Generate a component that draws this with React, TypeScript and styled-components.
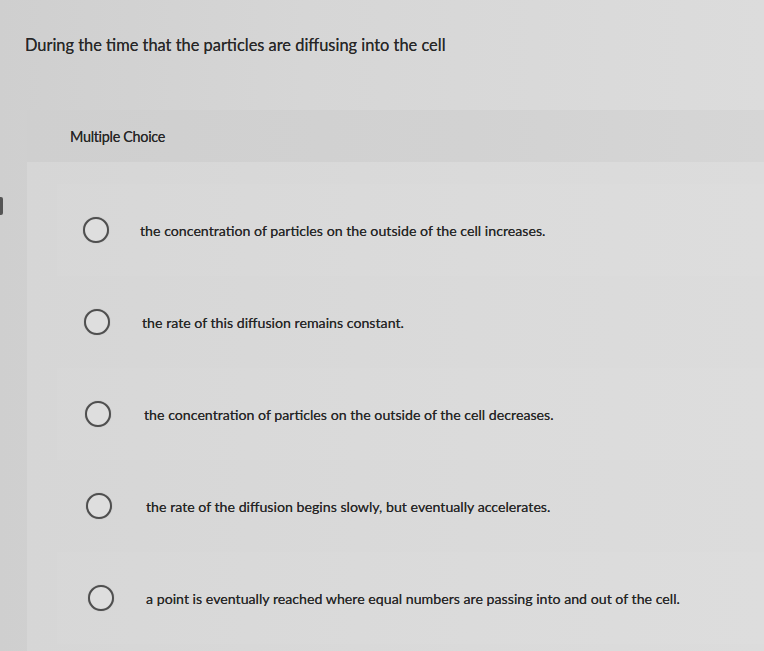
import React from "react";
import styled, { createGlobalStyle } from "styled-components";

const Global = createGlobalStyle`
  html, body {
    margin: 0;
    padding: 0;
    background: #d4d4d4;
  }
  body {
    font-family: Lato, "Open Sans", "Liberation Sans", sans-serif;
    color: #333;
    width: 764px;
    height: 651px;
    overflow: hidden;
  }
`;

const Page = styled.div`
  position: relative;
  width: 764px;
  height: 651px;
  overflow: hidden;
  background: linear-gradient(90deg, #cfcfcf 0%, #d6d6d6 40%, #dcdcdc 100%);
  display: flex;
  flex-direction: column;
`;

const EdgeTab = styled.div`
  position: absolute;
  left: 0;
  top: 197px;
  width: 3px;
  height: 18px;
  background: #555;
  border-radius: 0 2px 2px 0;
`;

const Title = styled.h1`
  margin: 0;
  padding: 34px 0 0 25px;
  height: 110px;
  flex: none;
  box-sizing: border-box;
  font-size: 16.4px;
  font-weight: 400;
  line-height: 22px;
  color: #262626;
  text-shadow: 0 0 0.6px rgba(0, 0, 0, 0.6);
`;

const Panel = styled.section`
  margin-left: 27px;
  flex: 1;
  background: linear-gradient(90deg, #d6d6d6 0%, #dadada 60%, #dcdcdc 100%);
  display: flex;
  flex-direction: column;
`;

const PanelHeader = styled.div`
  height: 52px;
  display: flex;
  align-items: center;
  padding-left: 43px;
  background: linear-gradient(90deg, #cfcfcf 0%, #d2d2d2 60%, #d6d6d6 100%);
  font-size: 14.4px;
  color: #242424;
  letter-spacing: -0.3px;
  text-shadow: 0 0 0.6px rgba(0, 0, 0, 0.6);
`;

const OptionList = styled.div`
  padding-top: 22px;
  display: flex;
  flex-direction: column;
`;

const Row = styled.label<{ $shift: number; $band: boolean }>`
  height: 92px;
  display: flex;
  align-items: center;
  padding-left: ${(p) => 26 + p.$shift}px;
  margin-left: 30px;
  background: ${(p) => (p.$band ? "rgba(255,255,255,0.035)" : "transparent")};
  cursor: pointer;
`;

const Radio = styled.span`
  width: 22px;
  height: 22px;
  flex: none;
  border-radius: 50%;
  border: 2px solid #4f4f4f;
  background: #dedede;
  box-shadow: 0 0 1px rgba(0, 0, 0, 0.3);
`;

const OptionText = styled.span<{ $gap: number }>`
  margin-left: ${(p) => p.$gap}px;
  font-size: 14.2px;
  color: #242424;
  text-shadow: 0 0 0.6px rgba(0, 0, 0, 0.6);
`;

const options = [
  { text: "the concentration of particles on the outside of the cell increases.", shift: 0, gap: 31 },
  { text: "the rate of this diffusion remains constant.", shift: 1, gap: 32 },
  { text: "the concentration of particles on the outside of the cell decreases.", shift: 2, gap: 33 },
  { text: "the rate of the diffusion begins slowly, but eventually accelerates.", shift: 3, gap: 34 },
  { text: "a point is eventually reached where equal numbers are passing into and out of the cell.", shift: 5, gap: 32 },
];

export default function App() {
  return (
    <>
      <Global />
      <Page>
        <EdgeTab />
        <Title>During the time that the particles are diffusing into the cell</Title>
        <Panel>
          <PanelHeader>Multiple Choice</PanelHeader>
          <OptionList>
            {options.map((o, i) => (
              <Row key={i} $shift={o.shift} $band={i % 2 === 0}>
                <Radio />
                <OptionText $gap={o.gap}>{o.text}</OptionText>
              </Row>
            ))}
          </OptionList>
        </Panel>
      </Page>
    </>
  );
}
